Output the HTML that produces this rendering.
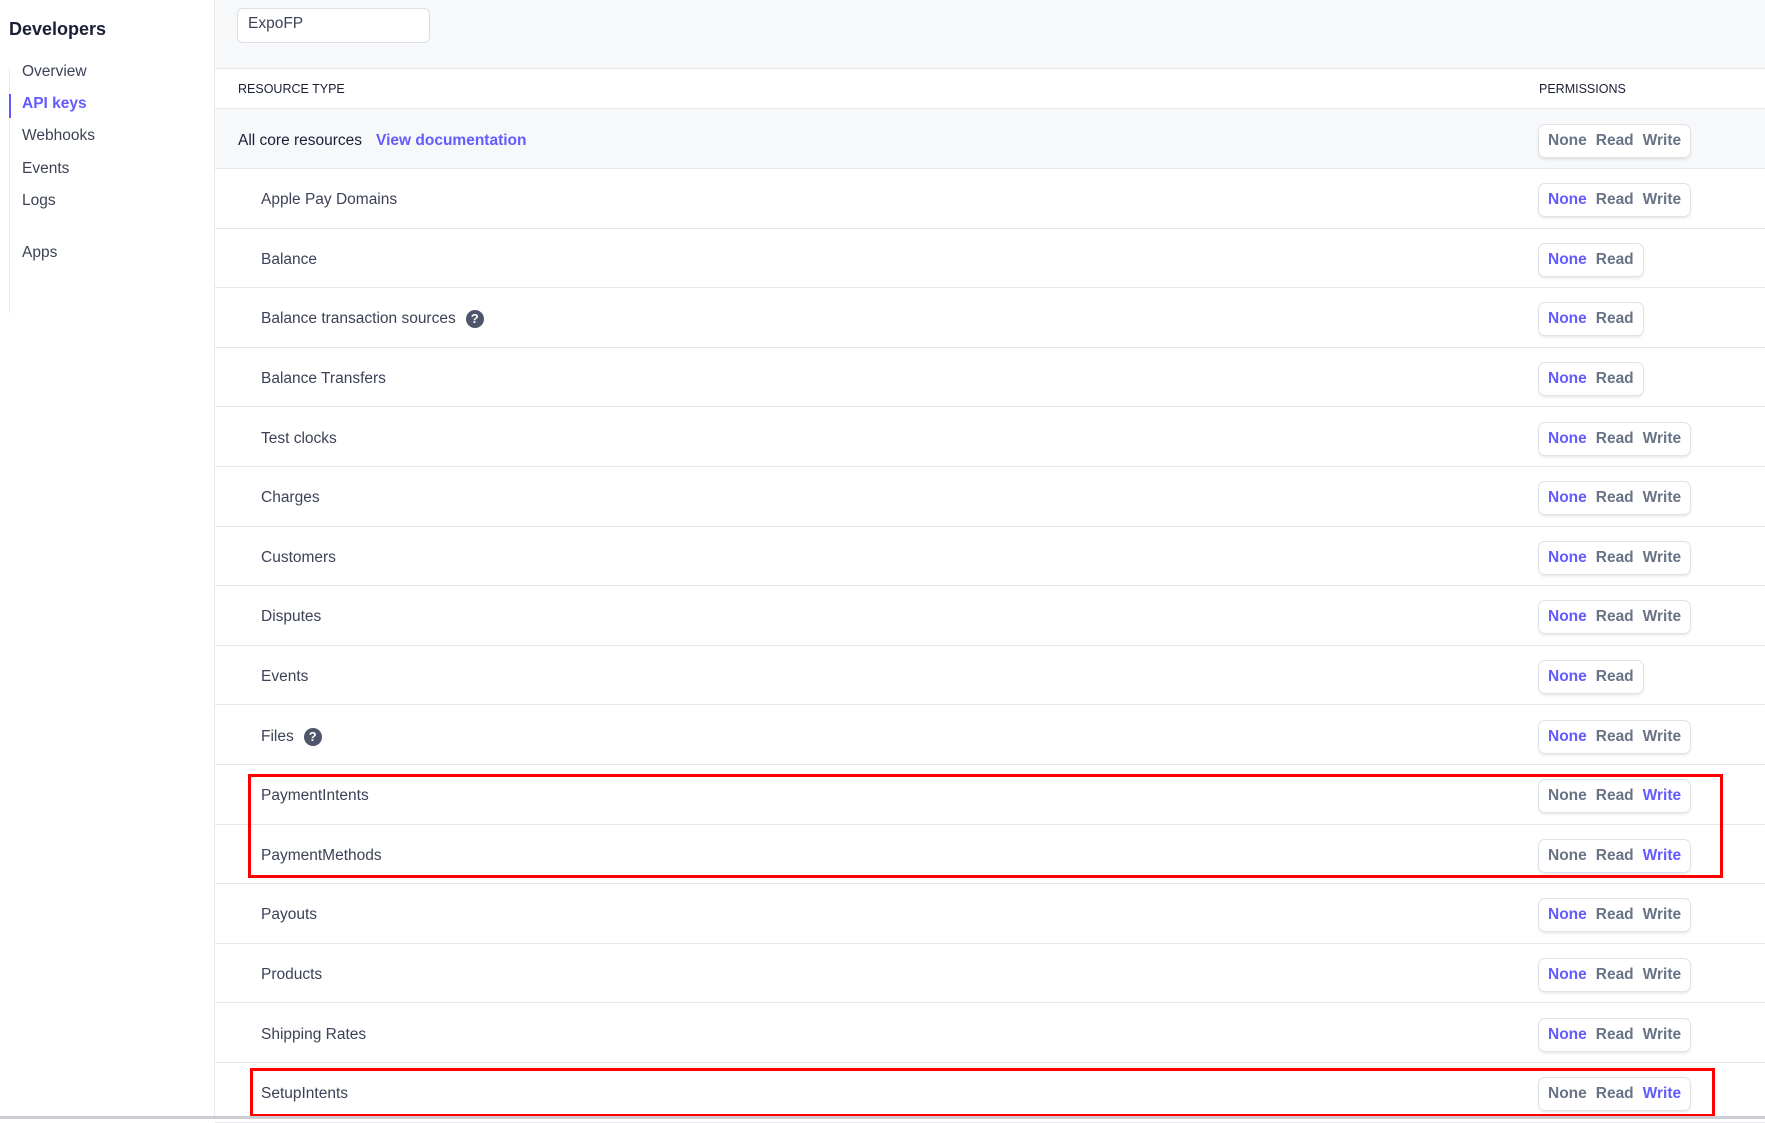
<!DOCTYPE html>
<html><head><meta charset="utf-8"><style>
*{box-sizing:border-box;margin:0;padding:0}
body{width:1765px;height:1119px;overflow:hidden;background:#fff;font-family:"Segoe UI","Liberation Sans",sans-serif;color:#3c4257;position:relative}
.side{position:absolute;left:0;top:0;width:215px;height:1119px;border-right:1px solid #e6e8eb;background:#fff}
.side h1{position:absolute;left:9px;top:19px;font-size:18px;font-weight:700;color:#1a1f36}
.side .line{position:absolute;left:9px;top:69px;width:1px;height:244px;background:#e3e8ee}
.side .act{position:absolute;left:9px;top:94px;width:2px;height:24px;background:#635bff}
.side a{position:absolute;left:22px;font-size:15.5px;color:#3c4257;text-decoration:none}
.top{position:absolute;left:215px;top:0;right:0;height:69px;background:#f6f8fa;border-bottom:1px solid #e6e8eb}
.inp{position:absolute;left:237px;top:8px;width:193px;height:35px;border:1px solid #dcdfe4;border-radius:6px;background:#fff;font-size:15.5px;padding:6px 10px;color:#3c4257}
.hdr{position:absolute;left:215px;right:0;top:69px;height:40px;border-bottom:1px solid #e6e8eb;font-size:12.5px;color:#1a1f36}
.hdr span{position:absolute;top:13px}
.row{position:absolute;left:215px;right:0;height:59.6px;border-bottom:1px solid #e6e8eb;font-size:15.5px}
.row .t{position:absolute;left:46px;top:calc(50% + 2px);transform:translateY(-50%);display:flex;align-items:center;white-space:nowrap}
.q{display:inline-block;width:18px;height:18px;border-radius:50%;background:#4f566b;color:#fff;font-size:13px;font-weight:700;text-align:center;line-height:18px;margin-left:10px}
.btn{position:absolute;left:1324px;top:calc(50% + 2px);transform:translateY(-50%);height:32px;border-radius:6px;background:#fff;box-shadow:0 0 0 1px #dfe3e8,0 2px 3px rgba(0,0,0,.12);display:flex;align-items:center;padding:0 9px;font-size:15.5px;color:#697386;font-weight:600;gap:9px}
.btn .on{color:#635bff;font-weight:700}
.red{position:absolute;border:3px solid #f00}
</style></head><body>
<div class="side">
<h1>Developers</h1>
<div class="line"></div><div class="act"></div>
<a style="top:63px">Overview</a>
<a style="top:95px;color:#635bff;font-weight:700">API keys</a>
<a style="top:127px">Webhooks</a>
<a style="top:160px">Events</a>
<a style="top:192px">Logs</a>
<a style="top:244px">Apps</a>
</div>
<div class="top"></div>
<div class="inp">ExpoFP</div>
<div class="hdr"><span style="left:23px">RESOURCE TYPE</span><span style="left:1324px">PERMISSIONS</span></div>
<div class="row" style="top:109px;height:60px;background:#f6f8fa"><div class="t" style="left:23px;color:#1a1f36">All core resources<span style="color:#635bff;font-weight:600;margin-left:14px">View documentation</span></div><div class="btn"><span>None</span><span>Read</span><span>Write</span></div></div>

<div class="row" style="top:169px"><div class="t">Apple Pay Domains</div><div class="btn"><span class="on">None</span><span>Read</span><span>Write</span></div></div>
<div class="row" style="top:228.6px"><div class="t">Balance</div><div class="btn"><span class="on">None</span><span>Read</span></div></div>
<div class="row" style="top:288.2px"><div class="t">Balance transaction sources<span class="q">?</span></div><div class="btn"><span class="on">None</span><span>Read</span></div></div>
<div class="row" style="top:347.8px"><div class="t">Balance Transfers</div><div class="btn"><span class="on">None</span><span>Read</span></div></div>
<div class="row" style="top:407.4px"><div class="t">Test clocks</div><div class="btn"><span class="on">None</span><span>Read</span><span>Write</span></div></div>
<div class="row" style="top:467px"><div class="t">Charges</div><div class="btn"><span class="on">None</span><span>Read</span><span>Write</span></div></div>
<div class="row" style="top:526.6px"><div class="t">Customers</div><div class="btn"><span class="on">None</span><span>Read</span><span>Write</span></div></div>
<div class="row" style="top:586.2px"><div class="t">Disputes</div><div class="btn"><span class="on">None</span><span>Read</span><span>Write</span></div></div>
<div class="row" style="top:645.8px"><div class="t">Events</div><div class="btn"><span class="on">None</span><span>Read</span></div></div>
<div class="row" style="top:705.4px"><div class="t">Files<span class="q">?</span></div><div class="btn"><span class="on">None</span><span>Read</span><span>Write</span></div></div>
<div class="row" style="top:765px"><div class="t">PaymentIntents</div><div class="btn"><span>None</span><span>Read</span><span class="on">Write</span></div></div>
<div class="row" style="top:824.6px"><div class="t">PaymentMethods</div><div class="btn"><span>None</span><span>Read</span><span class="on">Write</span></div></div>
<div class="row" style="top:884.2px"><div class="t">Payouts</div><div class="btn"><span class="on">None</span><span>Read</span><span>Write</span></div></div>
<div class="row" style="top:943.8px"><div class="t">Products</div><div class="btn"><span class="on">None</span><span>Read</span><span>Write</span></div></div>
<div class="row" style="top:1003.4px"><div class="t">Shipping Rates</div><div class="btn"><span class="on">None</span><span>Read</span><span>Write</span></div></div>
<div class="row" style="top:1063px"><div class="t">SetupIntents</div><div class="btn"><span>None</span><span>Read</span><span class="on">Write</span></div></div>

<div class="red" style="left:248px;top:774px;width:1475px;height:104px"></div>
<div class="red" style="left:250px;top:1068px;width:1465px;height:49px"></div>
<div style="position:absolute;left:0;right:0;top:1116px;height:3px;background:#c9ccd1"></div>
</body></html>
